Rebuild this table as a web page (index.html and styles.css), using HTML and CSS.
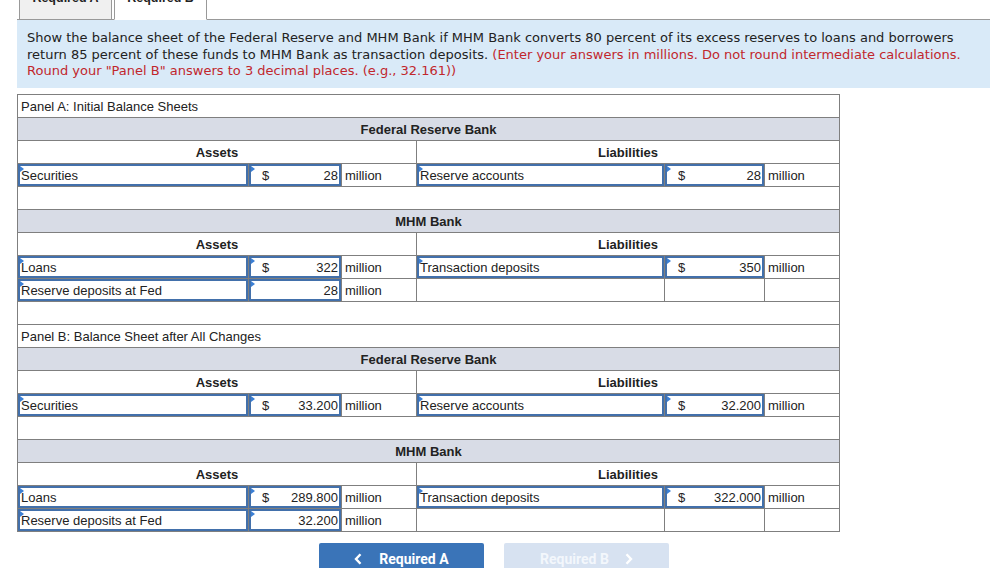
FILE: index.html
```html
<!DOCTYPE html>
<html lang="en">
<head>
<meta charset="utf-8">
<title>Balance sheet</title>
<link rel="stylesheet" href="styles.css">
</head>
<body>
<div class="page">
  <div class="tabs">
    <div class="tab">Required A</div>
    <div class="tab active">Required B</div>
  </div>

  <div class="instructions">Show the balance sheet of the Federal Reserve and MHM Bank if MHM Bank converts 80 percent of its excess reserves to loans and borrowers return 85 percent of these funds to MHM Bank as transaction deposits. <span class="red">(Enter your answers in millions. Do not round intermediate calculations. Round your "Panel B" answers to 3 decimal places. (e.g., 32.161))</span></div>

  <table class="bs">
    <colgroup>
      <col class="c-label"><col class="c-amt"><col class="c-unit">
      <col class="c-label2"><col class="c-amt2"><col class="c-unit">
    </colgroup>
    <tr><td colspan="6" class="panel">Panel A: Initial Balance Sheets</td></tr>
    <tr><th colspan="6" class="bank">Federal Reserve Bank</th></tr>
    <tr><th colspan="3" class="side">Assets</th><th colspan="3" class="side">Liabilities</th></tr>
    <tr>
      <td><div class="inp label">Securities</div></td>
      <td><div class="inp amt"><span>$</span><span>28</span></div></td>
      <td class="unit">million</td>
      <td><div class="inp label">Reserve accounts</div></td>
      <td><div class="inp amt"><span>$</span><span>28</span></div></td>
      <td class="unit">million</td>
    </tr>
    <tr><td colspan="6" class="blank"></td></tr>
    <tr><th colspan="6" class="bank">MHM Bank</th></tr>
    <tr><th colspan="3" class="side">Assets</th><th colspan="3" class="side">Liabilities</th></tr>
    <tr>
      <td><div class="inp label">Loans</div></td>
      <td><div class="inp amt"><span>$</span><span>322</span></div></td>
      <td class="unit">million</td>
      <td><div class="inp label">Transaction deposits</div></td>
      <td><div class="inp amt"><span>$</span><span>350</span></div></td>
      <td class="unit">million</td>
    </tr>
    <tr>
      <td><div class="inp label">Reserve deposits at Fed</div></td>
      <td><div class="inp amt"><span></span><span>28</span></div></td>
      <td class="unit">million</td>
      <td></td><td></td><td></td>
    </tr>
    <tr><td colspan="6" class="blank"></td></tr>
    <tr><td colspan="6" class="panel">Panel B: Balance Sheet after All Changes</td></tr>
    <tr><th colspan="6" class="bank">Federal Reserve Bank</th></tr>
    <tr><th colspan="3" class="side">Assets</th><th colspan="3" class="side">Liabilities</th></tr>
    <tr>
      <td><div class="inp label">Securities</div></td>
      <td><div class="inp amt"><span>$</span><span>33.200</span></div></td>
      <td class="unit">million</td>
      <td><div class="inp label">Reserve accounts</div></td>
      <td><div class="inp amt"><span>$</span><span>32.200</span></div></td>
      <td class="unit">million</td>
    </tr>
    <tr><td colspan="6" class="blank"></td></tr>
    <tr><th colspan="6" class="bank">MHM Bank</th></tr>
    <tr><th colspan="3" class="side">Assets</th><th colspan="3" class="side">Liabilities</th></tr>
    <tr>
      <td><div class="inp label">Loans</div></td>
      <td><div class="inp amt"><span>$</span><span>289.800</span></div></td>
      <td class="unit">million</td>
      <td><div class="inp label">Transaction deposits</div></td>
      <td><div class="inp amt"><span>$</span><span>322.000</span></div></td>
      <td class="unit">million</td>
    </tr>
    <tr>
      <td><div class="inp label">Reserve deposits at Fed</div></td>
      <td><div class="inp amt"><span></span><span>32.200</span></div></td>
      <td class="unit">million</td>
      <td></td><td></td><td></td>
    </tr>
  </table>

  <div class="nav">
    <div class="btn prev">
      <svg class="chev" width="8" height="12" viewBox="0 0 8 12"><path d="M6.5 1.2 L2 6 L6.5 10.8" fill="none" stroke="#fff" stroke-width="2.4"/></svg>
      <span>Required A</span>
    </div>
    <div class="btn next">
      <span>Required B</span>
      <svg class="chev" width="8" height="12" viewBox="0 0 8 12"><path d="M1.5 1.2 L6 6 L1.5 10.8" fill="none" stroke="#fff" stroke-width="2.4"/></svg>
    </div>
  </div>
</div>
</body>
</html>
```

FILE: styles.css
```css
* { box-sizing: border-box; }
html, body { margin: 0; padding: 0; background: #fff; overflow: hidden; }

.page {
  width: 990px;
  padding-left: 17px;
}

/* tabs (page is scrolled so their tops are cut off) */
.tabs {
  display: flex;
  gap: 2px;
  height: 33px;
  margin-top: -13px;
  padding-left: 2px;
  border-bottom: 1px solid #999;
}
.tab {
  width: 93px;
  height: 33px;
  margin-bottom: -1px;
  padding-top: 2px;
  border: 1px solid #999;
  background: #f0f0f0;
  text-align: center;
  font: bold 12.5px/16px "Liberation Sans", Arial, sans-serif;
  color: #222;
}
.tab.active {
  background: #fff;
  border-bottom-color: #fff;
}

.instructions {
  height: 68px;
  padding: 10px 10px 8px;
  background: #d9eaf8;
  font: 13px/16.5px "DejaVu Sans", Verdana, sans-serif;
  color: #222;
}
.red { color: #c1272d; }

/* balance sheet table */
.bs {
  margin-top: 6px;
  width: 823px;
  table-layout: fixed;
  border-collapse: collapse;
  border: 1px solid #7f7f7f;
  font: 13px "Liberation Sans", Arial, sans-serif;
  color: #222;
}
.c-label { width: 231px; }
.c-amt { width: 93px; }
.c-unit { width: 75px; }
.c-label2 { width: 248px; }
.c-amt2 { width: 100px; }

.bs td, .bs th {
  height: 23px;
  padding: 0;
  border: 1px solid #7f7f7f;
  vertical-align: middle;
}
.bs th { font-weight: bold; text-align: center; }
.bs .bank { background: #d8dce6; }
.bs .side { background: #fff; }
.bs .panel { padding-left: 3px; text-align: left; }
.bs .unit { padding-left: 3px; }

.inp {
  position: relative;
  display: flex;
  align-items: center;
  height: 22px;
  border: 2px solid #4270ab;
  background: #fff;
  white-space: nowrap;
}
.inp::before {
  content: "";
  position: absolute;
  left: 0;
  top: 0;
  border-left: 4px solid #3b7fd4;
  border-top: 3px solid transparent;
  border-bottom: 3px solid transparent;
}
.label { padding-left: 1px; }
.amt {
  justify-content: space-between;
  padding: 0 1px 0 11px;
}

/* navigation buttons */
.nav {
  display: flex;
  gap: 20px;
  margin: 11px 0 0 302px;
}
.btn {
  display: flex;
  align-items: center;
  justify-content: center;
  gap: 17px;
  width: 165px;
  height: 32px;
  border-radius: 2px;
  font: bold 14px Roboto, "Liberation Sans", Arial, sans-serif;
  color: #fff;
}
.btn.prev { background: #3a74b8; }
.btn.next { background: #d7e2f1; color: #f3f7fc; gap: 16px; }
.chev { display: block; }
```
